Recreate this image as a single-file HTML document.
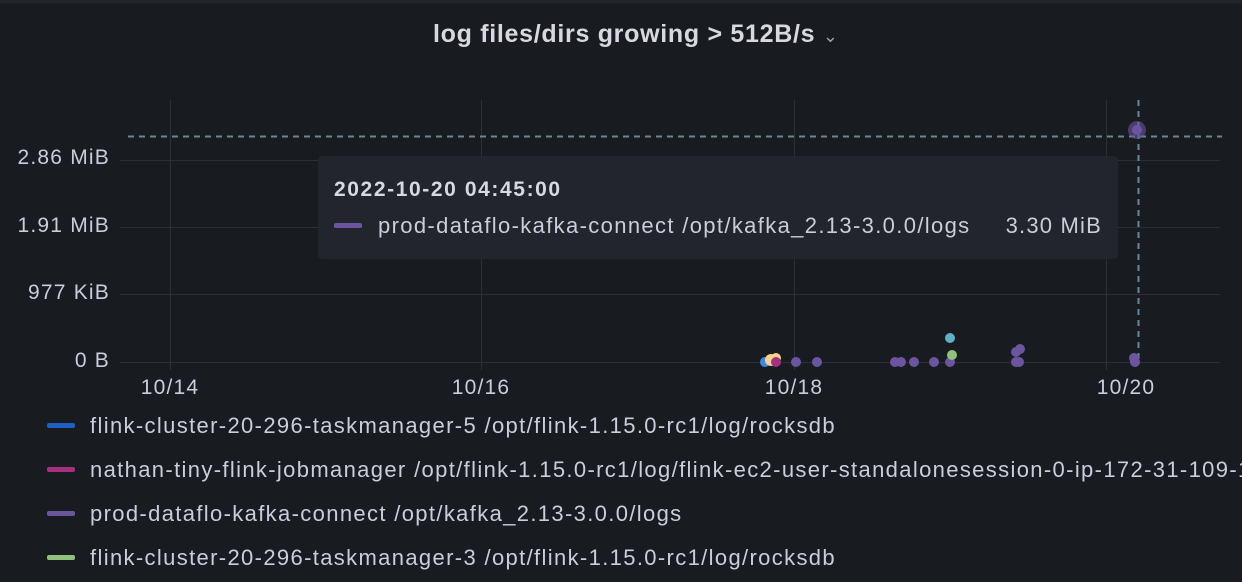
<!DOCTYPE html>
<html><head><style>
body{margin:0;width:1242px;height:582px;background:#181b1f;font-family:"Liberation Sans",sans-serif;overflow:hidden;position:relative;color:#ccccdc}
.top{position:absolute;left:0;top:0;width:1242px;height:3px;background:#24262b}
.title{position:absolute;top:20px;left:433px;font-size:25px;font-weight:bold;color:#d8d9e0;letter-spacing:0.7px;white-space:nowrap}
.yl{position:absolute;right:1132px;font-size:21px;color:#ccccdc;text-align:right;letter-spacing:1.2px}
.xl{position:absolute;top:376px;font-size:21px;color:#ccccdc;transform:translateX(-50%);letter-spacing:1.2px}
.tip{position:absolute;left:318px;top:156px;width:800px;height:103px;background:#22252b;border-radius:4px}
.leg{position:absolute;left:47px;font-size:22px;color:#ccccdc;white-space:nowrap;letter-spacing:1.35px}
.leg i{display:inline-block;width:28px;height:5px;border-radius:2px;vertical-align:middle;margin-right:15px;position:relative;top:-2px}
</style></head><body>
<div class="top"></div>
<div class="title">log files/dirs growing &gt; 512B/s <span style="font-size:18px;font-weight:normal;color:#9fa1aa">&#8964;</span></div>
<svg width="1242" height="582" style="position:absolute;left:0;top:0">
<g stroke="#2c2f35" stroke-width="1">
<line x1="120" y1="160.5" x2="1220" y2="160.5"/><line x1="120" y1="227.5" x2="1220" y2="227.5"/>
<line x1="120" y1="294.5" x2="1220" y2="294.5"/><line x1="120" y1="362.5" x2="1220" y2="362.5"/>
<line x1="170.5" y1="100" x2="170.5" y2="370"/><line x1="481.5" y1="100" x2="481.5" y2="370"/>
<line x1="794.5" y1="100" x2="794.5" y2="370"/><line x1="1106.5" y1="100" x2="1106.5" y2="370"/>
</g>
<g stroke="#6a8797" stroke-width="2" stroke-dasharray="6,5">
<line x1="128" y1="136.5" x2="1222" y2="136.5"/><line x1="1138.5" y1="100" x2="1138.5" y2="362"/>
</g>
<circle cx="1137" cy="130" r="9" fill="#6b55a0" opacity="0.6"/><circle cx="1137" cy="130" r="5" fill="#6b55a0"/>
<g fill="#6b55a0">
<circle cx="796" cy="362" r="5"/><circle cx="817" cy="362" r="5"/><circle cx="895" cy="362" r="5"/><circle cx="901" cy="362" r="5"/>
<circle cx="914" cy="362" r="5"/><circle cx="934" cy="362" r="5"/><circle cx="950" cy="362" r="5"/>
<circle cx="1016" cy="362" r="5"/><circle cx="1019" cy="362" r="5"/><circle cx="1016" cy="352" r="5"/><circle cx="1020" cy="349" r="5"/>
<circle cx="1134" cy="358" r="5"/><circle cx="1135" cy="362" r="5"/>
</g>
<circle cx="765" cy="362" r="5" fill="#3d86e8"/>
<circle cx="771" cy="360" r="6" fill="#f5d38a"/><circle cx="776" cy="358" r="5" fill="#f5d38a"/>
<circle cx="776" cy="362" r="5" fill="#a5307f"/>
<circle cx="950" cy="338" r="5" fill="#5fb0c9"/><circle cx="952" cy="355" r="5" fill="#8fc07c"/>
</svg>
<div class="yl" style="top:146px">2.86 MiB</div>
<div class="yl" style="top:214px">1.91 MiB</div>
<div class="yl" style="top:281px">977 KiB</div>
<div class="yl" style="top:349px">0 B</div>
<div class="xl" style="left:170px">10/14</div>
<div class="xl" style="left:481px">10/16</div>
<div class="xl" style="left:794px">10/18</div>
<div class="xl" style="left:1126px">10/20</div>
<div class="tip">
<div style="position:absolute;left:16px;top:22px;font-size:21px;font-weight:bold;color:#d8d9e0;letter-spacing:1.6px">2022-10-20 04:45:00</div>
<div style="position:absolute;left:16px;top:57px;font-size:22px;color:#ccccdc;white-space:nowrap;letter-spacing:1.35px"><span style="display:inline-block;width:28px;height:5px;background:#6b55a0;border-radius:2px;vertical-align:middle;margin-right:16px;position:relative;top:-2px"></span>prod-dataflo-kafka-connect /opt/kafka_2.13-3.0.0/logs</div>
<div style="position:absolute;right:16px;top:57px;font-size:22px;color:#ccccdc;letter-spacing:1.2px">3.30 MiB</div>
</div>
<div class="leg" style="top:413px"><i style="background:#1f60c4"></i>flink-cluster-20-296-taskmanager-5 /opt/flink-1.15.0-rc1/log/rocksdb</div>
<div class="leg" style="top:457px"><i style="background:#a5307f"></i>nathan-tiny-flink-jobmanager /opt/flink-1.15.0-rc1/log/flink-ec2-user-standalonesession-0-ip-172-31-109-1</div>
<div class="leg" style="top:501px"><i style="background:#6b55a0"></i>prod-dataflo-kafka-connect /opt/kafka_2.13-3.0.0/logs</div>
<div class="leg" style="top:545px"><i style="background:#8fc07c"></i>flink-cluster-20-296-taskmanager-3 /opt/flink-1.15.0-rc1/log/rocksdb</div>
</body></html>
